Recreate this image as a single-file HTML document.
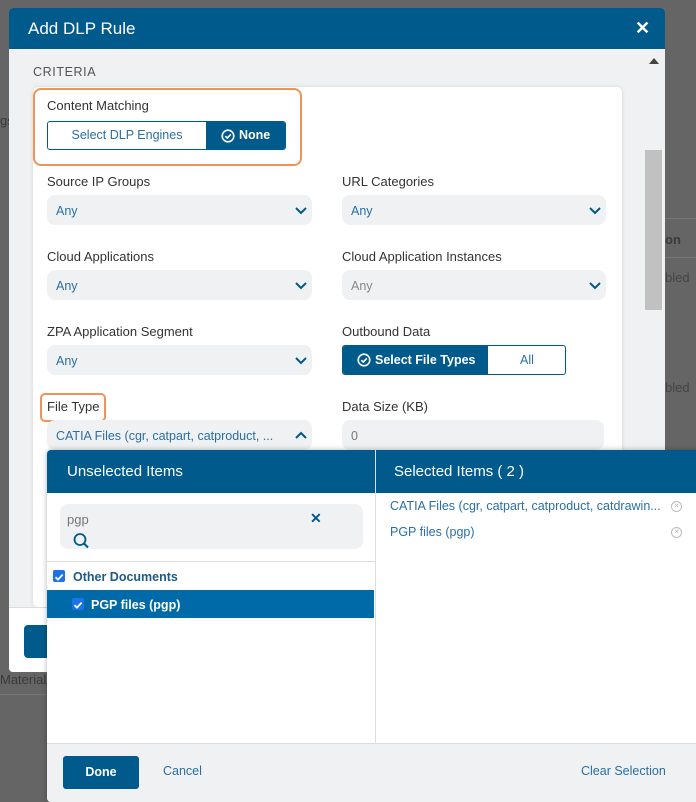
<!DOCTYPE html>
<html><head><style>
*{box-sizing:border-box;margin:0;padding:0}
body{width:696px;height:800px;overflow:hidden;background:#656565;font-family:"Liberation Sans",sans-serif;position:relative}
.a{position:absolute}
.lbl{font-size:13px;color:#333}
.sel{position:absolute;height:30px;background:#eff1f3;border-radius:8px;font-size:12.5px;color:#2a6fa4;padding:9px 0 0 9px}
.chev{position:absolute;right:5px;top:11px}
.chk{position:absolute;width:12px;height:12px;background:#1a73e8;border-radius:2px}
.ci{position:absolute;top:7px}
</style></head><body>
<div class="a" style="left:0;top:113px;font-size:13px;color:#3a3a3a">gs</div>
<div class="a" style="left:665px;top:232px;font-size:13px;color:#3a3a3a;font-weight:bold">on</div>
<div class="a" style="left:665px;top:270px;font-size:13px;color:#444">bled</div>
<div class="a" style="left:665px;top:380px;font-size:13px;color:#444">bled</div>
<div class="a" style="left:665px;top:218px;width:31px;height:1px;background:#777"></div>
<div class="a" style="left:665px;top:257px;width:31px;height:1px;background:#777"></div>
<div class="a" style="left:0;top:672px;font-size:13px;color:#3a3a3a">MaterialA</div>
<div class="a" style="left:0;top:694px;width:47px;height:1px;background:#777"></div>

<div class="a" style="left:9px;top:8px;width:656px;height:664px;background:#f0f1f3;border-radius:4px;overflow:hidden">
 <div class="a" style="left:0;top:0;width:656px;height:41px;background:#005a8c"></div>
 <div class="a" style="left:19px;top:11px;font-size:17px;color:#fff">Add DLP Rule</div>
 <div class="a" style="left:626px;top:10px;font-size:18px;color:#fff;font-weight:bold">✕</div>
 <div class="a" style="left:24px;top:57px;font-size:12.5px;color:#555;letter-spacing:.6px">CRITERIA</div>
 <div class="a" style="left:640px;top:50px;width:0;height:0;border-left:5px solid transparent;border-right:5px solid transparent;border-bottom:6px solid #444"></div>
 <div class="a" style="left:636px;top:142px;width:17px;height:160px;background:#c1c1c1"></div>
 <div class="a" style="left:24px;top:79px;width:589px;height:520px;background:#fff;border-radius:5px;box-shadow:0 0 4px rgba(0,0,0,.12)"></div>
 <div class="a" style="left:0;top:599px;width:656px;height:65px;background:#fff;border-top:1px solid #ddd"></div>
 <div class="a" style="left:15px;top:617px;width:40px;height:33px;background:#005a8c;border-radius:4px"></div>
</div>

<svg width="0" height="0" style="position:absolute"><defs>
<symbol id="cv" viewBox="0 0 12 8"><path d="M1 1.5L6 6.5L11 1.5" fill="none" stroke="#005a8c" stroke-width="2"/></symbol>
<symbol id="ok" viewBox="0 0 14 14"><circle cx="7" cy="7" r="5.8" fill="none" stroke="#fff" stroke-width="1.6"/><path d="M4.3 7.2L6.3 9.1L9.8 5.3" fill="none" stroke="#fff" stroke-width="1.6"/></symbol>
<symbol id="tk" viewBox="0 0 12 12"><path d="M2.5 6.2L5 8.6L9.6 3.6" fill="none" stroke="#fff" stroke-width="1.8"/></symbol>
</defs></svg>

<div class="a" style="left:33px;top:88px;width:269px;height:78px;border:2px solid #f0935a;border-radius:8px"></div>
<div class="a lbl" style="left:47px;top:98px">Content Matching</div>
<div class="a" style="left:47px;top:121px;width:239px;height:29px;border:1px solid #005a8c;border-radius:3px;overflow:hidden">
 <div class="a" style="left:0;top:0;width:158px;height:27px;font-size:12.5px;color:#2a6fa4;text-align:center;line-height:27px">Select DLP Engines</div>
 <div class="a" style="left:158px;top:0;width:80px;height:27px;background:#005a8c"><svg class="ci" style="left:15px" width="14" height="14"><use href="#ok"/></svg><span class="a" style="left:33px;top:0;color:#fff;font-size:12.5px;font-weight:bold;line-height:27px">None</span></div>
</div>

<div class="a lbl" style="left:47px;top:174px">Source IP Groups</div>
<div class="sel" style="left:47px;top:195px;width:265px">Any<svg class="chev" width="12" height="9"><use href="#cv"/></svg></div>
<div class="a lbl" style="left:342px;top:174px">URL Categories</div>
<div class="sel" style="left:342px;top:195px;width:264px">Any<svg class="chev" width="12" height="9"><use href="#cv"/></svg></div>

<div class="a lbl" style="left:47px;top:249px">Cloud Applications</div>
<div class="sel" style="left:47px;top:270px;width:265px">Any<svg class="chev" width="12" height="9"><use href="#cv"/></svg></div>
<div class="a lbl" style="left:342px;top:249px">Cloud Application Instances</div>
<div class="sel" style="left:342px;top:270px;width:264px;color:#888">Any<svg class="chev" width="12" height="9"><use href="#cv"/></svg></div>

<div class="a lbl" style="left:47px;top:324px">ZPA Application Segment</div>
<div class="sel" style="left:47px;top:345px;width:265px">Any<svg class="chev" width="12" height="9"><use href="#cv"/></svg></div>
<div class="a lbl" style="left:342px;top:324px">Outbound Data</div>
<div class="a" style="left:342px;top:345px;width:224px;height:30px;border:1px solid #005a8c;border-radius:3px;overflow:hidden">
 <div class="a" style="left:0;top:0;width:145px;height:28px;background:#005a8c"><svg class="ci" style="left:14px" width="14" height="14"><use href="#ok"/></svg><span class="a" style="left:32px;top:0;color:#fff;font-size:12.5px;font-weight:bold;line-height:28px;white-space:nowrap">Select File Types</span></div>
 <div class="a" style="left:145px;top:0;width:78px;height:28px;color:#2a6fa4;font-size:12.5px;text-align:center;line-height:28px">All</div>
</div>

<div class="a" style="left:40px;top:393px;width:66px;height:29px;border:2px solid #f0935a;border-radius:5px"></div>
<div class="a lbl" style="left:47px;top:399px">File Type</div>
<div class="sel" style="left:47px;top:420px;width:265px">CATIA Files (cgr, catpart, catproduct, ...<svg class="chev" width="12" height="9" style="transform:rotate(180deg)"><use href="#cv"/></svg></div>
<div class="a lbl" style="left:342px;top:399px">Data Size (KB)</div>
<div class="sel" style="left:342px;top:420px;width:262px;color:#777">0</div>

<div class="a" style="left:47px;top:450px;width:660px;height:352px;background:#fff;border-radius:4px;box-shadow:0 0 6px rgba(0,0,0,.3);overflow:hidden">
 <div class="a" style="left:0;top:0;width:660px;height:43px;background:#005a8c"></div>
 <div class="a" style="left:328px;top:0;width:1px;height:293px;background:#ddd"></div>
 <div class="a" style="left:20px;top:13px;font-size:15px;color:#fff">Unselected Items</div>
 <div class="a" style="left:347px;top:13px;font-size:15px;color:#fff">Selected Items ( 2 )</div>
 <div class="a" style="left:13px;top:54px;width:303px;height:45px;background:#eff1f3;border-radius:8px"></div>
 <div class="a" style="left:20px;top:62px;font-size:13px;color:#777">pgp</div>
 <div class="a" style="left:263px;top:60px;font-size:14px;color:#005a8c;font-weight:bold">✕</div>
 <svg class="a" style="left:25px;top:82px" width="20" height="18"><circle cx="8" cy="7.5" r="5.5" fill="none" stroke="#005a8c" stroke-width="1.8"/><path d="M12 11.5L16 15.5" stroke="#005a8c" stroke-width="2"/></svg>
 <div class="a" style="left:0;top:111px;width:328px;height:1px;background:#ddd"></div>
 <div class="chk" style="left:6px;top:120px"><svg width="12" height="12"><use href="#tk"/></svg></div>
 <div class="a" style="left:26px;top:120px;font-size:12.5px;font-weight:bold;color:#1d5a87">Other Documents</div>
 <div class="a" style="left:0;top:140px;width:327px;height:28px;background:#006aa8"></div>
 <div class="chk" style="left:25px;top:148px"><svg width="12" height="12"><use href="#tk"/></svg></div>
 <div class="a" style="left:44px;top:148px;font-size:12.5px;font-weight:bold;color:#fff">PGP files (pgp)</div>
 <div class="a" style="left:343px;top:49px;font-size:12.5px;color:#2a6fa4">CATIA Files (cgr, catpart, catproduct, catdrawin...</div>
 <div class="a" style="left:343px;top:75px;font-size:12.5px;color:#2a6fa4">PGP files (pgp)</div>
 <div class="a" style="left:624px;top:51px;width:11px;height:11px;border:1px solid #bbb;border-radius:50%;font-size:7px;color:#bbb;text-align:center;line-height:9px">✕</div>
 <div class="a" style="left:624px;top:77px;width:11px;height:11px;border:1px solid #bbb;border-radius:50%;font-size:7px;color:#bbb;text-align:center;line-height:9px">✕</div>
 <div class="a" style="left:0;top:293px;width:660px;height:60px;background:#f0f1f3;border-top:1px solid #ddd"></div>
 <div class="a" style="left:16px;top:306px;width:76px;height:33px;background:#005a8c;border-radius:3px;color:#fff;font-size:12.5px;font-weight:bold;text-align:center;line-height:33px">Done</div>
 <div class="a" style="left:116px;top:314px;font-size:12.5px;color:#2a6fa4">Cancel</div>
 <div class="a" style="left:534px;top:314px;font-size:12.5px;color:#2a6fa4">Clear Selection</div>
</div>
</body></html>
